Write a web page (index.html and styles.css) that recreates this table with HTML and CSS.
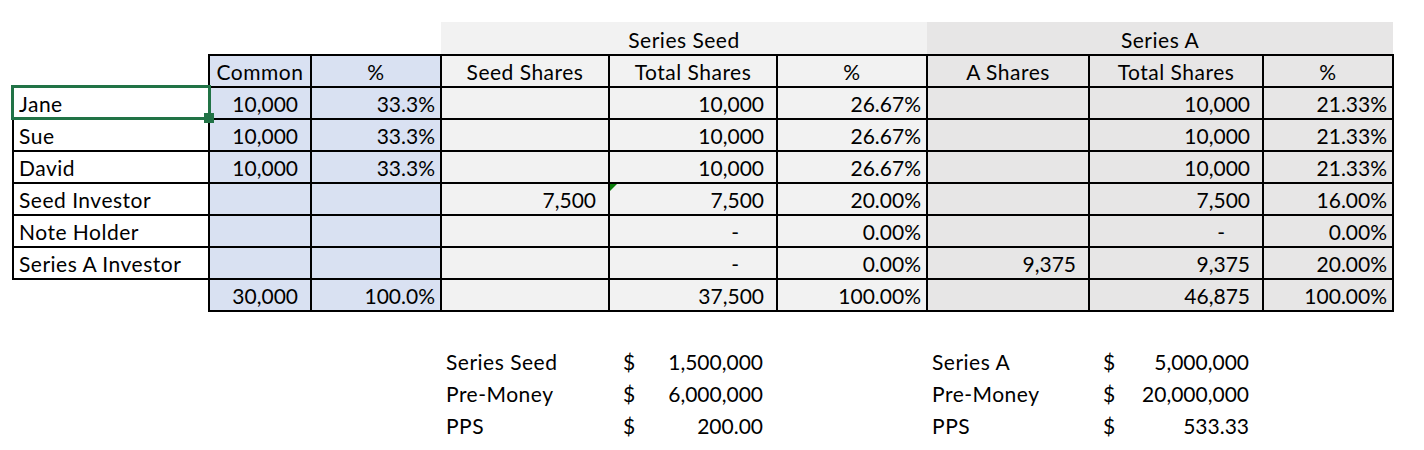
FILE: index.html
```html
<!DOCTYPE html>
<html>
<head>
<meta charset="utf-8">
<title>Cap Table</title>
<link rel="stylesheet" href="styles.css">
</head>
<body>
<div class="sheet">
<table class="cap">
  <colgroup>
    <col class="c-name"><col class="c-common"><col class="c-pct">
    <col class="c-seed"><col class="c-stot"><col class="c-spct">
    <col class="c-a"><col class="c-atot"><col class="c-apct">
  </colgroup>
  <tbody>
    <tr class="band">
      <td colspan="3" class="blank"></td>
      <td colspan="3" class="seed ctr">Series Seed</td>
      <td colspan="3" class="sera ctr">Series A</td>
    </tr>
    <tr class="grid">
      <td class="blank"></td>
      <td class="blue ctr">Common</td>
      <td class="blue ctr">%</td>
      <td class="seed ctr">Seed Shares</td>
      <td class="seed ctr">Total Shares</td>
      <td class="seed ctr">%</td>
      <td class="sera ctr">A Shares</td>
      <td class="sera ctr">Total Shares</td>
      <td class="sera ctr">%</td>
    </tr>
    <tr class="grid">
      <td class="name sel">Jane</td>
      <td class="blue num">10,000</td>
      <td class="blue pct">33.3%</td>
      <td class="seed"></td>
      <td class="seed num">10,000</td>
      <td class="seed pct">26.67%</td>
      <td class="sera"></td>
      <td class="sera num">10,000</td>
      <td class="sera pct">21.33%</td>
    </tr>
    <tr class="grid">
      <td class="name">Sue</td>
      <td class="blue num">10,000</td>
      <td class="blue pct">33.3%</td>
      <td class="seed"></td>
      <td class="seed num">10,000</td>
      <td class="seed pct">26.67%</td>
      <td class="sera"></td>
      <td class="sera num">10,000</td>
      <td class="sera pct">21.33%</td>
    </tr>
    <tr class="grid">
      <td class="name">David</td>
      <td class="blue num">10,000</td>
      <td class="blue pct">33.3%</td>
      <td class="seed"></td>
      <td class="seed num">10,000</td>
      <td class="seed pct">26.67%</td>
      <td class="sera"></td>
      <td class="sera num">10,000</td>
      <td class="sera pct">21.33%</td>
    </tr>
    <tr class="grid">
      <td class="name">Seed Investor</td>
      <td class="blue"></td>
      <td class="blue"></td>
      <td class="seed num">7,500</td>
      <td class="seed num note">7,500</td>
      <td class="seed pct">20.00%</td>
      <td class="sera"></td>
      <td class="sera num">7,500</td>
      <td class="sera pct">16.00%</td>
    </tr>
    <tr class="grid">
      <td class="name">Note Holder</td>
      <td class="blue"></td>
      <td class="blue"></td>
      <td class="seed"></td>
      <td class="seed dash">-</td>
      <td class="seed pct">0.00%</td>
      <td class="sera"></td>
      <td class="sera dash">-</td>
      <td class="sera pct">0.00%</td>
    </tr>
    <tr class="grid">
      <td class="name">Series A Investor</td>
      <td class="blue"></td>
      <td class="blue"></td>
      <td class="seed"></td>
      <td class="seed dash">-</td>
      <td class="seed pct">0.00%</td>
      <td class="sera num">9,375</td>
      <td class="sera num">9,375</td>
      <td class="sera pct">20.00%</td>
    </tr>
    <tr class="grid">
      <td class="blank"></td>
      <td class="blue num">30,000</td>
      <td class="blue pct">100.0%</td>
      <td class="seed"></td>
      <td class="seed num">37,500</td>
      <td class="seed pct">100.00%</td>
      <td class="sera"></td>
      <td class="sera num">46,875</td>
      <td class="sera pct">100.00%</td>
    </tr>
    <tr class="plain"><td colspan="9" class="blank"></td></tr>
    <tr class="plain">
      <td colspan="3" class="blank"></td>
      <td class="lbl">Series Seed</td>
      <td class="acct"><span>$</span><span>1,500,000</span></td>
      <td class="blank"></td>
      <td class="lbl">Series A</td>
      <td class="acct"><span>$</span><span>5,000,000</span></td>
      <td class="blank"></td>
    </tr>
    <tr class="plain">
      <td colspan="3" class="blank"></td>
      <td class="lbl">Pre-Money</td>
      <td class="acct"><span>$</span><span>6,000,000</span></td>
      <td class="blank"></td>
      <td class="lbl">Pre-Money</td>
      <td class="acct"><span>$</span><span>20,000,000</span></td>
      <td class="blank"></td>
    </tr>
    <tr class="plain">
      <td colspan="3" class="blank"></td>
      <td class="lbl">PPS</td>
      <td class="acct"><span>$</span><span>200.00</span></td>
      <td class="blank"></td>
      <td class="lbl">PPS</td>
      <td class="acct"><span>$</span><span>533.33</span></td>
      <td class="blank"></td>
    </tr>
  </tbody>
</table>
</div>
</body>
</html>
```

FILE: styles.css
```css
html, body {
  margin: 0;
  padding: 0;
  background: #ffffff;
}

.sheet {
  padding: 22px 0 0 12px;
}

.cap {
  border-collapse: collapse;
  table-layout: fixed;
  width: 1382px;
  font-family: Lato, "Open Sans", sans-serif;
  font-size: 21px;
  color: #000;
}

.c-name { width: 196px; }
.c-common { width: 102px; }
.c-pct { width: 130px; }
.c-seed { width: 168px; }
.c-stot { width: 168px; }
.c-spct { width: 150px; }
.c-a { width: 162px; }
.c-atot { width: 174px; }
.c-apct { width: 130px; }

.cap td {
  padding: 0 6px 4px 6px;
  line-height: 20px;
  vertical-align: bottom;
  white-space: nowrap;
  overflow: visible;
}

.band td { height: 28px; border: none; }
.grid td { height: 26px; border: 2px solid #000; }
.plain td { height: 28px; border: none; }

.cap td.blank { border: none; background: transparent; }

.blue { background: #d9e1f2; }
.seed { background: #f2f2f2; }
.sera { background: #e7e6e6; }

.ctr, .name, .lbl { letter-spacing: 0.5px; }

.ctr { text-align: center; }
.num { text-align: right; padding-right: 12px !important; }
.pct { text-align: right; padding-right: 5px !important; }
.dash { text-align: right; padding-right: 37px !important; }
.name { text-align: left; padding-left: 5px !important; }

.sel { position: relative; }
.sel::after {
  content: "";
  position: absolute;
  left: -3px;
  top: -3px;
  right: -3px;
  bottom: -2px;
  border: 3px solid #217346;
  pointer-events: none;
}
.sel::before {
  content: "";
  position: absolute;
  right: -6px;
  bottom: -5px;
  width: 10px;
  height: 10px;
  background: #217346;
  z-index: 2;
}

.note { position: relative; }
.note::before {
  content: "";
  position: absolute;
  left: 0;
  top: 0;
  width: 0;
  height: 0;
  border-top: 7px solid #0a7d0a;
  border-right: 7px solid transparent;
}

.lbl { text-align: left; padding-left: 5px !important; }

.acct {
  padding: 0 14px 4px 14px !important;
}
.acct span:first-child { float: left; }
.acct span:last-child { float: right; }
```
